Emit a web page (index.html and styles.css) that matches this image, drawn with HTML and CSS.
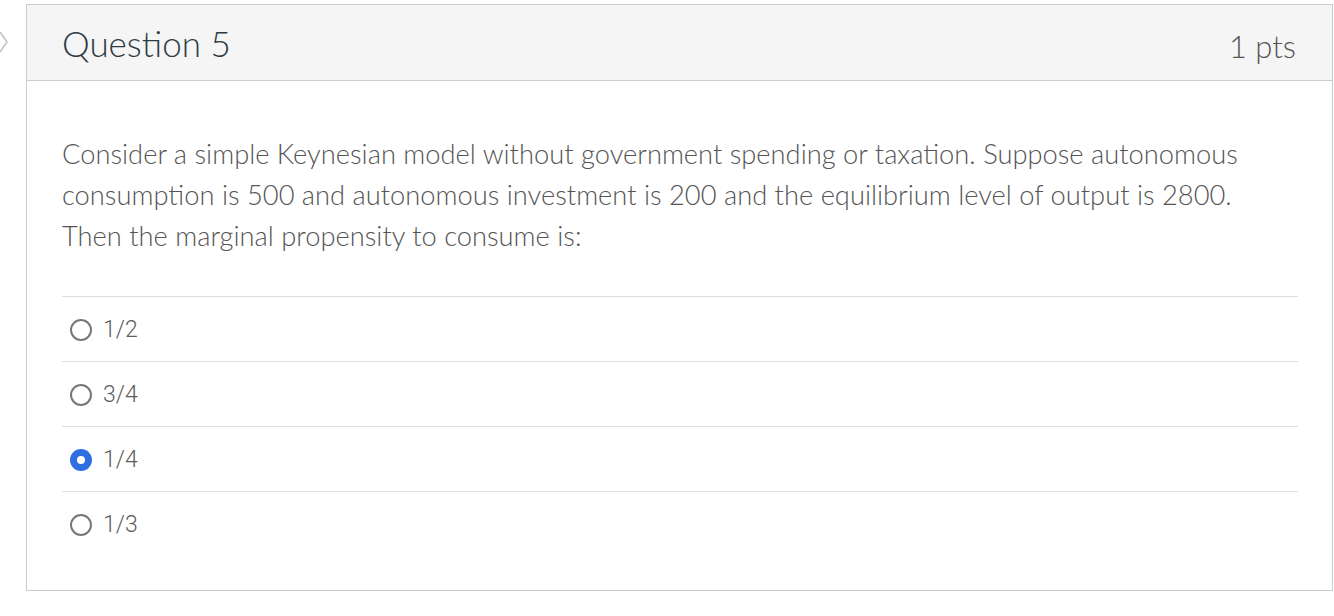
FILE: index.html
```html
<!DOCTYPE html>
<html>
<head>
<meta charset="utf-8">
<link rel="stylesheet" href="styles.css">
</head>
<body>
<div class="page">
  <div class="nav">
    <svg class="chev" width="12" height="24" viewBox="0 0 12 24"><path d="M2 2 L9 12 L2 22" fill="none" stroke="#c4c4c4" stroke-width="1.6"/></svg>
  </div>
  <div class="card">
    <div class="head">
      <div class="title">Question 5</div>
      <div class="pts">1 pts</div>
    </div>
    <div class="body">
      <p class="text">Consider a simple Keynesian model without government spending or taxation. Suppose autonomous consumption is 500 and autonomous investment is 200 and the equilibrium level of output is 2800. Then the marginal propensity to consume is:</p>
      <div class="answers">
        <div class="answer"><span class="radio"></span><span class="label">1/2</span></div>
        <div class="answer"><span class="radio"></span><span class="label">3/4</span></div>
        <div class="answer"><span class="radio on"></span><span class="label">1/4</span></div>
        <div class="answer"><span class="radio"></span><span class="label">1/3</span></div>
      </div>
    </div>
  </div>
</div>
</body>
</html>
```
FILE: styles.css
```css
html, body { margin: 0; padding: 0; background: #fff; }
.page { display: flex; align-items: flex-start; padding-top: 4px; }
.nav { width: 26px; flex: none; padding-top: 26px; }
.chev { display: block; margin-left: -2px; }
.card { width: 1307px; border: 1px solid #c7cdd1; box-sizing: border-box; height: 587px; }
.head { height: 76px; background: #f5f5f5; border-bottom: 1px solid #c7cdd1; display: flex; align-items: center; justify-content: space-between; padding: 0 36px 0 35px; box-sizing: border-box; font-family: Lato, sans-serif; font-weight: 300; }
.title { font-size: 35px; color: #2d3b45; font-weight: 300; padding-top: 1px; }
.pts { font-size: 31px; color: #555; padding-top: 6px; }
.body { padding: 52px 34px 0 35px; }
.text { margin: 0; font-family: Lato, sans-serif; font-weight: 300; font-size: 27.3px; line-height: 41px; color: #555; }
.answers { margin-top: 40px; }
.answer { height: 64px; border-top: 1px solid #dedede; display: flex; align-items: center; padding-left: 8px; }
.radio { width: 18px; height: 18px; border: 2px solid #777; border-radius: 50%; flex: none; box-sizing: content-box; margin-top: 2px; }
.radio.on { border: 7px solid #2d6fe0; width: 8px; height: 8px; background: #fff; }
.label { margin-left: 11px; font-family: Roboto, "Liberation Sans", sans-serif; font-weight: 300; font-size: 23px; color: #5c5c5c; }
```
